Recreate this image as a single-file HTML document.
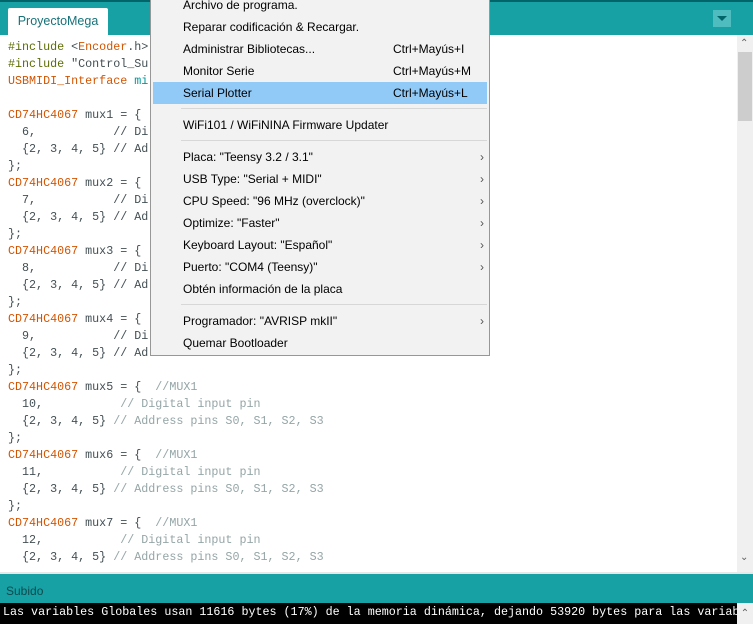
<!DOCTYPE html>
<html><head><meta charset="utf-8"><style>
*{margin:0;padding:0;box-sizing:border-box}
body{width:753px;height:624px;overflow:hidden;background:#fff;position:relative;font-family:"Liberation Sans",sans-serif}
.top{position:absolute;left:0;top:0;width:753px;height:35px;background:#17a1a5}
.top:before{content:"";position:absolute;left:0;top:0;width:753px;height:2px;background:#006468}
.tab{position:absolute;left:8px;top:8px;width:100px;height:27px;background:#fff;border-radius:2px 2px 0 0;color:#17727a;font-size:12.5px;line-height:27px;text-align:center}
.dd{position:absolute;left:713px;top:10px;width:18px;height:17px;background:#4fbdc0}
.dd:after{content:"";position:absolute;left:4px;top:6px;border-left:5px solid transparent;border-right:5px solid transparent;border-top:5px solid #006468}
.code{position:absolute;left:8px;top:39px;font-family:"Liberation Mono",monospace;font-size:11.7px;line-height:17px;color:#434f54;white-space:pre}
.k{color:#d35400}.c{color:#95a5a6}.i{color:#5e6d03}.t{color:#00979c}
.sb{position:absolute;left:737px;top:35px;width:16px;height:537px;background:#f0f0f0}
.thumb{position:absolute;left:738px;top:52px;width:14px;height:69px;background:#cdcdcd}
.arr{position:absolute;left:740px;color:#606060;font-size:10px}
.status{position:absolute;left:0;top:572px;width:753px;height:31px;background:#17a1a5;border-top:2px solid #e8e8e8}
.status span{position:absolute;left:6px;top:10px;font-size:12px;color:#0f4a4c}
.con{position:absolute;left:0;top:603px;width:753px;height:21px;background:#000;color:#fff;font-family:"Liberation Mono",monospace;font-size:11.7px;line-height:18px;padding-left:3px;white-space:pre;overflow:hidden}
.csb{position:absolute;left:737px;top:603px;width:16px;height:21px;background:#f0f0f0;color:#606060;font-size:10px;text-align:center;line-height:21px}
.menu{position:absolute;left:150px;top:-4px;width:340px;height:360px;background:#f2f2f2;border:1px solid #979797;font-size:12px;color:#000}
.it{position:absolute;left:32px;height:22px;line-height:22px;width:305px}
.sc{position:absolute;left:210px}
.gt{position:absolute;left:297px;color:#555}
.hl{position:absolute;left:2px;top:85px;width:334px;height:22px;background:#91c9f7}
.sep{position:absolute;left:30px;width:306px;height:1px;background:#d7d7d7}
</style></head><body>
<div class="top"><div class="tab">ProyectoMega</div><div class="dd"></div></div>
<div class="code"><span class="i">#include</span> &lt;<span class="k">Encoder</span>.h&gt;
<span class="i">#include</span> "Control_Su
<span class="k">USBMIDI_Interface</span> <span class="t">mi</span>

<span class="k">CD74HC4067</span> mux1 = {
  6,           // Di
  {2, 3, 4, 5} // Ad
};
<span class="k">CD74HC4067</span> mux2 = {
  7,           // Di
  {2, 3, 4, 5} // Ad
};
<span class="k">CD74HC4067</span> mux3 = {
  8,           // Di
  {2, 3, 4, 5} // Ad
};
<span class="k">CD74HC4067</span> mux4 = {
  9,           // Di
  {2, 3, 4, 5} // Ad
};
<span class="k">CD74HC4067</span> mux5 = {  <span class="c">//MUX1</span>
  10,           <span class="c">// Digital input pin</span>
  {2, 3, 4, 5} <span class="c">// Address pins S0, S1, S2, S3</span>
};
<span class="k">CD74HC4067</span> mux6 = {  <span class="c">//MUX1</span>
  11,           <span class="c">// Digital input pin</span>
  {2, 3, 4, 5} <span class="c">// Address pins S0, S1, S2, S3</span>
};
<span class="k">CD74HC4067</span> mux7 = {  <span class="c">//MUX1</span>
  12,           <span class="c">// Digital input pin</span>
  {2, 3, 4, 5} <span class="c">// Address pins S0, S1, S2, S3</span></div>
<div class="sb"></div><div class="thumb"></div>
<div class="arr" style="top:38px">&#8963;</div>
<div class="arr" style="top:552px">&#8964;</div>
<div class="status"><span>Subido</span></div>
<div class="con">Las variables Globales usan 11616 bytes (17%) de la memoria dinámica, dejando 53920 bytes para las variab</div>
<div class="csb">&#8963;</div>
<div class="menu">
<div class="hl"></div>
<div class="it" style="top:-3px">Archivo de programa.</div>
<div class="it" style="top:19px">Reparar codificación &amp; Recargar.</div>
<div class="it" style="top:41px">Administrar Bibliotecas...<span class="sc">Ctrl+Mayús+I</span></div>
<div class="it" style="top:63px">Monitor Serie<span class="sc">Ctrl+Mayús+M</span></div>
<div class="it" style="top:85px">Serial Plotter<span class="sc">Ctrl+Mayús+L</span></div>
<div class="sep" style="top:111px"></div>
<div class="it" style="top:117px">WiFi101 / WiFiNINA Firmware Updater</div>
<div class="sep" style="top:143px"></div>
<div class="it" style="top:149px">Placa: "Teensy 3.2 / 3.1"<span class="gt">›</span></div>
<div class="it" style="top:171px">USB Type: "Serial + MIDI"<span class="gt">›</span></div>
<div class="it" style="top:193px">CPU Speed: "96 MHz (overclock)"<span class="gt">›</span></div>
<div class="it" style="top:215px">Optimize: "Faster"<span class="gt">›</span></div>
<div class="it" style="top:237px">Keyboard Layout: "Español"<span class="gt">›</span></div>
<div class="it" style="top:259px">Puerto: "COM4 (Teensy)"<span class="gt">›</span></div>
<div class="it" style="top:281px">Obtén información de la placa</div>
<div class="sep" style="top:307px"></div>
<div class="it" style="top:313px">Programador: "AVRISP mkII"<span class="gt">›</span></div>
<div class="it" style="top:335px">Quemar Bootloader</div>
</div>
</body></html>
